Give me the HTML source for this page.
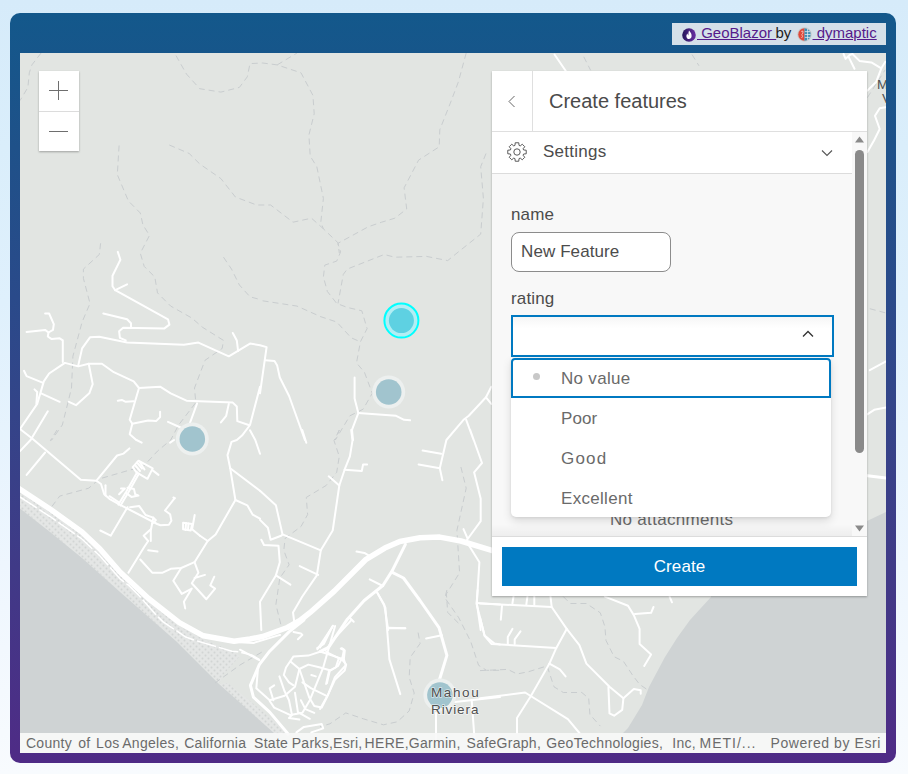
<!DOCTYPE html>
<html><head><meta charset="utf-8">
<style>
*{box-sizing:border-box;margin:0;padding:0}
html,body{width:908px;height:774px;overflow:hidden}
body{font-family:"Liberation Sans",sans-serif;background:linear-gradient(180deg,#d6ebfa 0%,#daeefb 19%,#dff0fc 39%,#eef6fe 73%,#f8fbfe 100%);position:relative}
.a{position:absolute;white-space:nowrap}
#frame{position:absolute;left:10px;top:13px;width:886px;height:750px;border-radius:10px;background:linear-gradient(180deg,#13588b 0%,#1f5189 18%,#2a4a8a 38%,#334589 52%,#403a87 74%,#4f2b86 100%)}
#credit{position:absolute;left:672px;top:23px;width:214px;height:22px;background:#d5e0e9}
#credit .t{position:absolute;top:-0.7px;font-size:15px;line-height:22px;color:#551a8b;text-decoration:underline}
#map{position:absolute;left:20px;top:53px;width:866px;height:700px;background:#e2e5e2;overflow:hidden}
#map svg.m{position:absolute;left:0;top:0}
#zoom{position:absolute;left:19px;top:18px;width:40px;height:80px;background:#fff;box-shadow:0 1px 2px rgba(0,0,0,.3)}
#attr{position:absolute;left:0;top:680px;width:866px;height:20px;background:rgba(248,248,248,.9);font-size:14px;color:#6b6b6b;line-height:20px;white-space:nowrap}
#panel{position:absolute;left:472px;top:18px;width:375px;height:525px;background:#fff;box-shadow:0 1px 2px rgba(0,0,0,.3)}
#panel .t{position:absolute;white-space:nowrap;color:#4c4c4c}
</style></head>
<body>
<div id="frame"></div>
<div id="credit">
  <svg class="a" style="left:10px;top:5px" width="14" height="14" viewBox="0 0 14 14"><defs><linearGradient id="gb" x1="0" y1="0" x2="1" y2="0"><stop offset="0" stop-color="#24175a"/><stop offset="1" stop-color="#6b2fa3"/></linearGradient></defs><circle cx="7" cy="7" r="6.8" fill="url(#gb)"/><path d="M7 2.6 C8.8 4.6 9.8 6.2 9.6 8.2 C9.4 10 8.3 11 7 11 C5.7 11 4.6 10 4.4 8.4 C4.3 7.3 4.9 6.2 5.5 5.6 C5.6 6.6 6 7.2 6.4 7.4 C6.3 5.6 6.5 4 7 2.6Z" fill="#fff"/></svg>
  <span class="t" style="left:25px">&nbsp;GeoBlazor&nbsp;</span>
  <span class="t" style="left:103.5px;color:#222;text-decoration:none">by</span>
  <svg class="a" style="left:125px;top:4px" width="15" height="15" viewBox="0 0 15 15"><circle cx="7.5" cy="7.5" r="7.2" fill="#c9c9c9"/><path d="M7.5 1.3 A6.2 6.2 0 0 0 7.5 13.7Z" fill="#e0493a"/><path d="M7.5 1.3 A6.2 6.2 0 0 1 7.5 13.7Z" fill="#3f8fb5"/><path d="M4.2 4.5 L5.8 4 L6 6 L4.8 7.5 L5.5 9.5 L4.5 11" stroke="#f3d0c8" stroke-width=".8" fill="none"/><path d="M7.8 4.6H13M7.8 7.5H13.7M7.8 10.4H13M10.6 1.8V13.2" stroke="#dfeaf0" stroke-width=".8" fill="none"/></svg>
  <span class="t" style="left:140.5px">&nbsp;dymaptic</span>
</div>
<div id="map">
<svg class="m" width="866" height="700" viewBox="20 53 866 700">
<defs><pattern id="dots" width="6" height="6" patternUnits="userSpaceOnUse"><rect width="6" height="6" fill="#e4e6e5"/><circle cx="1.5" cy="1.5" r="1" fill="#d2d5d4"/><circle cx="4.5" cy="4.5" r="1" fill="#d2d5d4"/></pattern></defs>
<path d="M20.0 492.0 L50.0 512.0 L82.0 535.0 L100.0 552.0 L120.0 575.0 L148.5 601.0 L179.3 626.0 L203.0 639.0 L234.0 652.0 L240.0 656.0 L223.0 675.0 L219.0 684.0 L228.0 683.0 L290.0 734.0 L274.0 734.0 L219.0 684.0 L177.0 642.0 L120.0 592.0 L82.0 558.0 L50.0 532.0 L20.0 508.5Z" fill="url(#dots)"/>
<path d="M20.0 508.5 L50.0 532.0 L82.0 558.0 L120.0 592.0 L177.0 642.0 L219.0 684.0 L274.0 733.0 L20.0 733.0Z" fill="#cfd3d4"/>
<path d="M623.0 733.0 L628.0 728.0 L642.0 705.0 L649.0 687.0 L665.0 657.0 L677.0 638.0 L690.0 620.0 L711.0 597.0 L711.0 560.0 L867.0 521.0 L886.0 512.0 L886.0 733.0Z" fill="#cfd3d4"/>
<g fill="none" stroke="#c9cdcf" stroke-width="1" stroke-dasharray="6 4"><path d="M41.1 53.0 L31.9 64.9 L29.3 72.8 L27.9 87.4 L20.0 100.6"/><path d="M176.0 55.6 L186.5 74.1 L199.7 88.7 L220.9 92.1 L239.4 87.4 L247.3 76.8 L250.0 63.6 L262.6 63.0 L277.2 64.9 L301.0 72.8 L312.9 95.3 L314.2 113.8 L308.9 135.0 L310.2 156.1 L316.8 166.7 L323.4 198.4 L320.8 222.2 L323.4 228.8 L338.0 242.8 L339.3 253.0"/><path d="M277.2 64.9 L297.0 53.0"/><path d="M119.1 145.5 L117.3 174.6 L128.4 201.0 L140.3 213.0 L142.9 224.8 L149.5 235.4 L140.3 253.2 L144.2 266.4 L154.8 277.0 L157.5 292.9 L170.7 306.1 L191.8 318.0 L202.4 327.2 L223.5 340.4 L222.2 348.4 L205.0 360.3 L194.5 388.0 L195.8 402.6 L178.6 425.0 L170.7 440.0 L157.5 451.1 L141.6 468.3 L131.0 469.7 L99.3 478.9 L88.7 488.2 L59.7 496.1 L51.7 506.7"/><path d="M169.3 145.0 L189.2 153.5 L199.8 164.0 L220.9 178.6 L235.4 197.0 L256.6 205.0 L270.6 205.0 L293.0 222.2 L311.5 218.2 L323.4 228.8"/><path d="M100.6 243.3 L99.3 254.5 L83.4 269.1 L83.4 278.3 L90.0 303.4 L82.1 322.0 L72.9 356.3 L71.5 388.0 L67.6 403.9 L62.3 425.0 L51.7 440.0 L50.4 440.6 L57.0 430.0"/><path d="M466.2 53.0 L458.3 82.1 L450.3 103.2 L439.8 129.7 L439.2 146.8 L418.6 160.1 L404.1 187.8 L406.7 209.0 L394.8 218.2 L381.6 222.2 L368.4 226.7 L338.0 243.3 L338.0 244.0 L340.6 251.9 L336.7 261.1 L324.8 265.1 L323.4 277.0 L327.4 291.5 L336.7 303.4 L347.2 307.4 L361.8 310.8 L367.1 328.6 L360.4 341.8 L356.5 362.9 L364.4 372.2 L372.3 393.3 L363.1 409.2 L349.9 415.8 L335.3 440.0 L339.3 430.0"/><path d="M486.0 153.5 L480.7 166.7 L483.4 198.4 L480.7 234.1 L457.0 253.0 L447.7 260.6 L426.5 256.4 L394.8 257.2 L384.2 254.5 L347.2 269.1 L343.3 274.4 L338.0 303.4"/><path d="M223.5 257.2 L231.5 269.1 L239.4 285.0 L250.0 296.8 L260.0 299.5"/><path d="M262.6 300.8 L297.0 306.1 L320.8 316.7 L336.7 322.0 L351.2 337.8 L360.4 341.8"/><path d="M339.3 430.0 L334.0 440.6 L339.3 456.4 L336.7 472.3 L326.1 485.5 L306.3 497.4 L307.6 514.6 L301.0 526.5 L285.1 538.4 L283.8 550.3 L289.1 564.8 L279.8 578.0 L275.9 604.5 L281.1 625.6"/><path d="M460.9 467.0 L466.2 488.2 L456.9 530.5 L459.6 572.7 L446.4 593.9 L447.7 612.4 L460.9 625.6"/><path d="M446.9 590.0 L444.9 597.9 L458.8 617.8 L470.7 641.5 L478.6 665.3 L486.5 670.3 L500.0 670.3"/><path d="M418.1 632.6 L420.1 643.5 L410.2 657.4 L409.2 677.2 L414.2 693.1 L409.2 710.9 L397.3 721.8 L383.4 724.8 L363.6 718.9 L345.8 712.9 L329.9 723.8 L320.0 726.8"/><path d="M563.3 596.6 L570.2 603.5 L586.4 603.5 L600.3 612.8 L604.9 626.6 L606.0 640.5 L614.1 656.7 L623.4 661.3 L632.6 675.2 L639.6 684.4 L646.5 689.1"/><path d="M480.0 670.6 L507.8 669.4 L517.0 674.0 L528.6 671.7 L547.1 665.9 L554.0 686.8 L563.3 692.5 L581.8 692.5 L588.7 698.3 L589.9 714.5 L600.3 726.1"/><path d="M583.8 56.8 L590.6 70.3"/><path d="M692.0 54.5 L699.0 65.8"/><path d="M869.8 308.7 L886.0 313.0"/><path d="M867.4 97.6 L885.2 69.8"/><path d="M215.0 683.0 L240.0 665.0 L262.0 652.0"/></g>
<g fill="none" stroke="#fff" stroke-width="2" stroke-linejoin="round" stroke-linecap="round"><path d="M117.8 251.9 L120.4 259.8 L112.5 275.7 L112.5 286.3 L115.2 290.2 L168.0 319.3 L169.4 324.6 L164.1 328.6 L123.1 327.8 L119.1 331.2 L119.9 337.8 L125.7 340.4"/><path d="M115.2 290.2 L127.1 284.4"/><path d="M103.3 313.5 L127.1 319.3 L131.0 323.3 L131.0 327.2"/><path d="M78.2 365.6 L82.1 348.4 L90.0 337.3 L99.3 336.7 L127.1 342.6 L183.9 344.7 L198.4 342.6 L228.8 356.3 L250.0 343.6 L260.0 345.2 L266.6 347.1 L260.0 393.3"/><path d="M232.8 333.0 L236.8 340.4 L238.1 351.0"/><path d="M26.6 332.0 L45.1 329.9 L48.5 332.5 L47.8 336.5 L51.7 339.1 L59.7 338.3 L62.8 340.4 L62.8 362.1"/><path d="M45.1 313.5 L49.1 313.5 L53.8 324.1 L53.0 329.9 L48.5 332.5"/><path d="M20.0 429.0 L37.2 403.9 L43.8 381.4 L49.1 373.5 L64.9 362.9 L78.2 366.4 L88.7 363.7 L101.9 363.7 L113.8 372.2 L133.7 381.4 L139.0 388.0 L160.1 386.7 L170.7 393.3 L186.5 400.7 L232.8 402.6 L236.8 406.5 L237.3 421.1 L248.7 425.0"/><path d="M88.7 363.7 L92.7 384.1 L89.3 393.3 L76.0 405.2 L68.9 401.8"/><path d="M139.0 388.0 L129.7 419.7 L132.3 423.7 L129.7 434.3 L136.3 440.0"/><path d="M132.3 423.7 L148.2 420.5 L156.1 421.1 L160.1 417.1 L160.1 411.8"/><path d="M197.1 403.4 L189.2 425.0"/><path d="M228.8 403.9 L226.2 415.8 L220.9 422.4"/><path d="M260.0 386.7 L250.0 425.0 L242.0 435.6 L236.8 440.0 L231.5 441.9 L227.5 455.1 L230.2 468.3 L235.4 500.0 L215.6 534.4 L207.7 541.0 L194.5 562.2 L181.2 568.0 L170.7 568.8 L162.7 572.7 L152.2 572.7 L140.3 559.5"/><path d="M250.0 430.3 L255.3 440.0 L260.0 453.8"/><path d="M24.0 370.8 L26.6 376.1 L42.5 382.7"/><path d="M34.5 389.4 L37.2 392.0 L36.4 403.9"/><path d="M41.1 393.3 L59.7 401.8"/><path d="M47.8 411.3 L30.6 440.0 L20.0 451.1"/><path d="M117.8 400.7 L121.8 399.9 L125.7 401.8 L133.7 401.2"/><path d="M168.0 421.9 L183.9 429.0"/><path d="M20.0 429.0 L31.9 438.3 L80.8 479.7 L96.5 480.7 L117.1 455.5 L123.6 453.6 L129.4 448.4"/><path d="M45.1 452.5 L26.6 474.9"/><path d="M96.5 480.7 L101.0 484.0 L104.2 494.3 L109.4 498.8 L119.7 504.6 L157.2 524.0 L160.4 525.3 L168.9 524.7 L171.4 520.8 L170.1 514.3 L165.0 510.5 L174.7 498.2"/><path d="M127.5 507.2 L110.7 535.7 L100.3 530.5"/><path d="M137.2 472.3 L126.2 491.7 L118.4 504.6"/><path d="M139.0 473.5 L128.0 493.0 L120.5 505.5"/><path d="M127.5 487.8 L134.0 489.1 L135.2 494.3 L138.5 495.6 L131.4 496.9 L126.2 493.0"/><path d="M121.0 488.5 L124.9 488.5 L119.1 494.3"/><path d="M105.5 485.2 L105.5 495.6"/><path d="M109.4 496.2 L118.4 502.0"/><path d="M130.1 507.2 L139.1 505.9 L145.6 515.0 L153.3 517.6 L155.9 520.1 L152.0 524.0"/><path d="M153.3 517.6 L150.8 530.5 L150.8 541.0"/><path d="M150.8 529.2 L143.6 535.7 L148.2 541.0"/><path d="M136.5 440.0 L141.7 442.6"/><path d="M170.1 442.6 L174.0 440.0"/><path d="M132.7 467.1 L138.5 460.7 L152.7 468.4 L147.5 478.8 L136.5 472.3 L132.7 467.1"/><path d="M135.0 465.0 L140.0 471.0"/><path d="M137.0 462.5 L142.0 468.5"/><path d="M139.5 461.5 L144.5 469.5"/><path d="M183.1 522.7 L192.1 524.0 L190.8 530.5 L183.1 529.2 L183.1 522.7"/><path d="M186.0 523.0 L185.5 530.0"/><path d="M188.5 523.5 L188.0 530.0"/><path d="M152.7 470.4 L158.5 474.9"/><path d="M148.2 541.0 L144.2 547.0 L128.4 572.7"/><path d="M235.4 500.0 L247.3 505.3 L252.6 514.6 L260.0 518.6"/><path d="M230.2 468.3 L260.0 490.8"/><path d="M207.7 541.0 L200.0 535.7"/><path d="M194.7 515.0 L192.1 529.2 L200.0 535.7"/><path d="M174.7 498.2 L173.4 497.5"/><path d="M194.5 562.2 L198.4 572.7 L191.8 583.3 L206.4 599.2 L215.1 588.6 L210.3 585.4 L214.3 576.7"/><path d="M181.2 568.0 L173.3 580.7 L181.8 593.9 L191.8 588.6 L183.9 601.8 L185.2 608.4"/><path d="M194.5 578.0 L205.0 574.9"/><path d="M148.2 550.3 L157.5 551.6"/><path d="M265.3 360.3 L274.5 361.1 L277.2 365.6 L279.8 377.5 L289.1 396.0 L304.9 440.0"/><path d="M354.6 377.5 L354.6 398.6 L358.3 413.1 L352.0 429.8 L353.0 440.0"/><path d="M358.3 413.1 L396.1 415.8 L404.1 419.8 L410.1 420.3"/><path d="M491.3 386.7 L486.0 397.3 L468.8 415.8 L463.5 419.8 L446.4 440.0 L439.8 468.3 L442.4 480.2"/><path d="M486.0 397.3 L491.3 403.9"/><path d="M466.2 419.8 L473.6 440.0 L470.2 430.0 L482.0 463.0 L474.1 472.3 L480.7 498.7 L480.7 521.2 L466.2 541.0"/><path d="M422.6 450.6 L441.1 453.8"/><path d="M418.6 464.4 L439.8 468.3"/><path d="M463.5 529.1 L467.5 538.4"/><path d="M351.2 430.0 L352.5 440.6 L349.9 456.4 L344.6 469.7 L339.3 485.5 L332.7 530.5 L320.8 550.3 L316.8 575.4 L302.3 596.5 L293.0 612.4 L294.4 623.0"/><path d="M344.6 469.7 L361.8 471.0 L363.1 464.4 L367.1 464.4"/><path d="M328.7 476.3 L339.3 485.5"/><path d="M260.0 490.8 L275.9 505.3 L282.5 534.4 L320.8 550.3"/><path d="M260.0 519.9 L267.9 527.8 L270.6 539.7 L281.1 535.7 L282.5 534.4"/><path d="M261.3 539.7 L264.0 545.0 L278.5 545.8 L279.8 562.2 L275.9 575.4 L260.0 601.8 L261.3 630.0"/><path d="M275.9 575.4 L290.4 584.6"/><path d="M299.7 566.1 L318.2 574.9"/><path d="M302.3 430.0 L306.3 442.7"/><path d="M356.5 551.6 L364.4 552.9 L371.0 556.9"/><path d="M369.7 579.4 L382.9 586.0"/><path d="M376.3 591.3 L384.2 604.5 L388.2 630.0"/><path d="M466.2 541.0 L479.4 562.2 L476.8 603.1 L480.7 630.0"/><path d="M476.8 603.1 L500.0 604.5"/><path d="M388.2 628.3 L405.4 628.3"/><path d="M377.5 593.0 L385.4 607.8 L388.4 645.5 L389.4 659.4 L400.3 694.1"/><path d="M388.4 627.7 L405.2 628.3"/><path d="M426.1 638.6 L441.9 635.2"/><path d="M349.7 617.8 L353.7 621.7"/><path d="M332.9 625.7 L320.0 647.5"/><path d="M320.0 651.5 L343.8 659.4 L345.8 665.3 L334.9 677.2 L327.9 695.1 L320.0 709.0"/><path d="M340.8 648.5 L344.8 650.5 L343.8 659.4"/><path d="M338.8 658.4 L335.9 667.3 L329.9 670.3 L326.9 683.2"/><path d="M436.0 712.9 L436.0 740.0"/><path d="M454.8 702.0 L500.0 697.1"/><path d="M471.7 700.0 L474.6 740.0"/><path d="M477.6 590.0 L476.6 603.9 L484.6 635.6 L494.5 643.5 L500.0 644.5"/><path d="M257.8 670.5 L256.3 688.3 L269.7 700.2 L284.6 695.7 L295.0 686.8 L299.4 669.0 L308.3 664.6 L320.2 667.5 L330.6 670.5 L338.0 666.0 L342.5 657.1 L344.0 649.7 L341.7 648.2"/><path d="M269.7 701.0 L274.2 707.6 L290.5 715.1 L302.4 712.8 L309.8 700.2 L323.2 667.5 L335.1 625.9"/><path d="M351.4 620.0 L333.6 639.3 L326.1 649.7 L308.3 655.6 L293.5 656.4 L286.0 667.5 L283.8 675.0 L289.0 682.4 L293.5 685.3"/><path d="M317.2 648.2 L323.9 643.8 L332.8 625.9"/><path d="M326.1 651.9 L342.5 660.1 L346.2 664.6 L344.7 670.5 L335.1 679.4 L327.6 695.7 L321.7 707.6 L314.3 706.1 L309.1 697.2 L299.4 669.0"/><path d="M290.5 661.6 L299.4 669.0"/><path d="M302.4 682.4 L311.3 688.3 L326.1 695.7"/><path d="M329.1 670.5 L326.1 683.9"/><path d="M311.3 675.0 L315.8 676.4"/><path d="M279.4 676.4 L284.6 691.3 L289.0 700.2 L292.0 715.1 L289.0 718.0 L299.4 719.5"/><path d="M274.2 685.3 L269.7 688.3 L273.4 700.2"/><path d="M295.0 692.8 L297.9 712.1 L309.8 718.8"/><path d="M300.9 700.2 L305.4 709.1 L314.3 712.8"/><path d="M296.4 732.4 L303.9 726.9 L321.7 724.0 L323.2 728.4 L311.3 732.4"/><path d="M293.5 631.9 L300.9 633.4 L302.4 634.9 L297.9 639.3"/><path d="M240.0 642.3 L253.4 643.0 L280.1 634.9"/><path d="M240.0 649.7 L259.3 660.1"/><path d="M332.4 626.7 L317.4 649.2"/><path d="M480.0 603.5 L551.7 607.0 L566.7 628.9 L579.4 645.1 L586.4 663.6 L609.5 686.8 L623.4 698.3 L622.2 709.9 L614.1 715.7 L609.5 713.4 L608.4 686.8"/><path d="M623.4 698.3 L633.8 689.1 L640.7 690.2 L640.7 693.7"/><path d="M551.7 607.0 L550.5 596.6"/><path d="M512.4 603.5 L513.5 596.6"/><path d="M526.3 604.7 L527.4 596.6"/><path d="M534.3 604.7 L534.3 596.6"/><path d="M502.0 605.8 L500.8 619.7"/><path d="M480.0 617.4 L484.6 635.9 L491.6 644.0 L556.3 647.9 L566.7 628.9"/><path d="M507.8 644.0 L507.8 637.0 L512.4 628.9"/><path d="M514.7 644.0 L514.7 639.3 L520.5 631.3"/><path d="M556.3 647.9 L549.4 663.6 L530.9 696.0 L517.0 718.0 L517.0 733.0"/><path d="M549.4 663.6 L559.8 669.4 L565.6 676.4"/><path d="M480.0 698.3 L525.1 692.5 L567.9 719.1 L579.4 733.0"/><path d="M604.9 596.6 L628.0 605.8 L633.8 615.1 L639.6 628.9 L639.6 644.0 L651.1 654.4 L644.2 665.9"/><path d="M635.0 613.9 L651.1 612.8 L653.5 607.0"/><path d="M669.6 596.6 L672.0 602.3"/><path d="M843.6 54.0 L845.6 58.9 L849.6 55.0 L852.5 54.0 L859.5 60.9 L871.4 62.4 L881.3 68.3 L885.2 61.9"/><path d="M848.6 56.9 L854.5 68.8"/><path d="M881.3 68.3 L876.3 81.7 L867.4 90.6"/><path d="M885.4 107.2 L879.7 108.2 L875.0 115.8 L879.7 129.0 L874.0 140.5 L867.4 152.0"/><path d="M869.8 370.2 L886.0 361.4"/><path d="M867.6 414.2 L874.2 409.8 L886.0 407.6"/><path d="M554.5 54.5 L565.8 71.0"/></g>
<g fill="none" stroke="#fff" stroke-width="3" stroke-linejoin="round" stroke-linecap="round"><path d="M405.4 544.3 L392.3 570.6 L382.9 585.5 L364.2 600.5 L347.4 619.2 L328.6 647.3 L320.0 651.5"/><path d="M392.3 572.4 L403.5 578.0 L420.0 600.5 L439.0 627.7 L446.9 655.4 L439.0 681.2"/><path d="M303.9 620.0 L289.0 631.9 L269.7 651.2 L259.3 664.6 L250.4 685.3 L253.4 697.2 L269.7 712.1 L286.0 731.4 L288.0 734.0"/><path d="M867.6 475.7 L886.0 477.9"/></g>
<path d="M20.0 497.0 L50.0 516.5 L82.0 539.0 L100.0 556.0 L120.0 578.8 L128.8 585.4 L138.7 595.2 L156.2 615.0 L162.8 621.6 L185.8 637.0 L194.6 640.2 L231.9 651.2 L239.6 652.0 L251.7 655.0 L260.5 660.0" fill="none" stroke="#fff" stroke-width="1.5" stroke-dasharray="20 3"/>
<path d="M18.0 488.0 L50.0 509.0 L82.0 532.0 L100.0 549.0 L120.0 572.0 L148.5 598.5 L179.3 622.7 L203.4 635.8 L234.1 641.3 L250.0 639.0 L262.7 636.5 L287.4 627.5 L300.0 620.5 L309.9 612.7 L334.3 591.1 L366.1 559.3 L384.8 548.1 L399.8 541.5 L420.0 537.8 L439.8 537.1 L460.9 541.0 L500.0 552.9 L520.0 560.0" fill="none" stroke="#fff" stroke-width="5.5" stroke-linejoin="round"/>
<circle cx="192.3" cy="439" r="16.5" fill="#edf0ef"/><circle cx="192.3" cy="439" r="12.8" fill="#a1c4ce"/>
<circle cx="388.7" cy="392" r="16.5" fill="#edf0ef"/><circle cx="388.7" cy="392" r="12.8" fill="#a1c4ce"/>
<circle cx="439.9" cy="695.1" r="16.5" fill="#edf0ef"/><circle cx="439.9" cy="695.1" r="12.8" fill="#a1c4ce"/>
<circle cx="401.4" cy="320.6" r="17" fill="#b2eef4" stroke="#00ffff" stroke-width="2"/><circle cx="401.4" cy="320.6" r="12.5" fill="#5ed1e2"/>
<g font-family="Liberation Sans" font-size="13.5" fill="#505050" stroke="rgba(255,255,255,.6)" stroke-width="1.5" paint-order="stroke" letter-spacing=".9"><text x="431" y="696.6" letter-spacing="1.6">Mahou</text><text x="431" y="714.2">Riviera</text></g>
<g font-family="Liberation Sans" font-size="13.5" fill="#505050"><text x="877" y="89">M</text><text x="882" y="103">V</text></g>
</svg>
<div id="zoom">
  <div class="a" style="left:0;top:40px;width:40px;height:1px;background:#dcdcdc"></div>
  <div class="a" style="left:10px;top:19px;width:19px;height:1px;background:#6e6e6e"></div>
  <div class="a" style="left:19px;top:10px;width:1px;height:19px;background:#6e6e6e"></div>
  <div class="a" style="left:10px;top:60px;width:19px;height:1px;background:#6e6e6e"></div>
</div>
<div id="panel">
  <!-- header -->
  <div class="a" style="left:0;top:60px;width:375px;height:1px;background:#dfdfdf"></div>
  <div class="a" style="left:40px;top:0;width:1px;height:60px;background:#dfdfdf"></div>
  <svg class="a" style="left:15px;top:24px" width="10" height="13" viewBox="0 0 10 13"><path d="M7.5 1 L2 6.5 L7.5 12" stroke="#666" stroke-width="1" fill="none"/></svg>
  <span class="t" style="left:57px;top:18px;font-size:20px;line-height:24px;color:#4a4a4a">Create features</span>
  <!-- scroll area -->
  <div class="a" style="left:0;top:61px;width:360px;height:404px;background:#f8f8f8;overflow:hidden">
    <div class="a" style="left:0;top:0;width:360px;height:42px;background:#fff;border-bottom:1px solid #dcdcdc"></div>
    <svg class="a" style="left:15px;top:10px" width="20" height="20" viewBox="0 0 20 20"><g fill="none" stroke="#5a5a5a" stroke-width="1" stroke-linejoin="round"><path d="M16.60 7.98 L19.23 8.21 L19.23 11.79 L16.60 12.02 L16.09 13.24 L17.79 15.26 L15.26 17.79 L13.24 16.09 L12.02 16.60 L11.79 19.23 L8.21 19.23 L7.98 16.60 L6.76 16.09 L4.74 17.79 L2.21 15.26 L3.91 13.24 L3.40 12.02 L0.77 11.79 L0.77 8.21 L3.40 7.98 L3.91 6.76 L2.21 4.74 L4.74 2.21 L6.76 3.91 L7.98 3.40 L8.21 0.77 L11.79 0.77 L12.02 3.40 L13.24 3.91 L15.26 2.21 L17.79 4.74 L16.09 6.76Z"/><circle cx="10" cy="10" r="3.2"/></g></svg>
    <span class="t" style="left:51px;top:9px;font-size:17px;line-height:22px;letter-spacing:.25px">Settings</span>
    <svg class="a" style="left:329px;top:16.5px" width="12" height="8" viewBox="0 0 12 8"><path d="M1 1.5 L6 6.5 L11 1.5" stroke="#555" stroke-width="1.1" fill="none"/></svg>
    <span class="t" style="left:19px;top:72px;font-size:17px;line-height:22px;letter-spacing:.15px">name</span>
    <div class="a" style="left:19px;top:100px;width:160px;height:40px;border:1px solid #8c8c8c;border-radius:8px;background:#fff"></div>
    <span class="t" style="left:29px;top:109px;font-size:17px;line-height:22px;letter-spacing:.1px">New Feature</span>
    <span class="t" style="left:19px;top:156px;font-size:17px;line-height:22px;letter-spacing:.15px">rating</span>
    <div class="a" style="left:19px;top:183px;width:323px;height:42px;border:2px solid #0079c1;background:linear-gradient(180deg,#f6f6f6,#fff 30%)"></div>
    <svg class="a" style="left:309px;top:197px" width="14" height="9" viewBox="0 0 14 9"><path d="M2 7.5 L7 2.5 L12 7.5" stroke="#333" stroke-width="1.3" fill="none"/></svg>
    <span class="t" style="left:118px;top:376.5px;font-size:17px;line-height:22px;color:#6a6a6a;letter-spacing:.3px">No attachments</span>
  </div>
  <div class="a" style="left:0;top:453px;width:375px;height:12px;background:linear-gradient(180deg,rgba(0,0,0,0),rgba(0,0,0,.045))"></div>
  <!-- scrollbar -->
  <div class="a" style="left:360px;top:61px;width:15px;height:404px;background:#f8f8f8"></div>
  <svg class="a" style="left:363px;top:65px" width="9" height="7" viewBox="0 0 9 7"><path d="M4.5 0.5 L9 6.5 H0Z" fill="#8a8a8a"/></svg>
  <div class="a" style="left:363px;top:79px;width:9px;height:303px;border-radius:5px;background:#8a8a8a"></div>
  <svg class="a" style="left:363px;top:454px" width="9" height="7" viewBox="0 0 9 7"><path d="M0 0.5 H9 L4.5 6.5Z" fill="#8a8a8a"/></svg>
  <!-- footer -->
  <div class="a" style="left:0;top:465px;width:375px;height:1px;background:#dcdcdc"></div>
  <div class="a" style="left:10px;top:476px;width:355px;height:39px;background:#0079c1"></div>
  <span class="t" style="left:10px;top:484.5px;width:355px;text-align:center;font-size:17px;line-height:22px;color:#fff;letter-spacing:.1px">Create</span>
</div>
<!-- dropdown -->
<div class="a" style="left:491px;top:305px;width:320px;height:159px;background:#fff;border-radius:0 0 5px 5px;box-shadow:0 4px 10px rgba(0,0,0,.12),0 1px 3px rgba(0,0,0,.08)">
  <div class="a" style="left:0;top:0;width:320px;height:40px;border:2px solid #0079c1;border-radius:4px 4px 0 0"></div>
  <div class="a" style="left:22px;top:15px;width:7px;height:7px;border-radius:50%;background:#c8c8c8"></div>
  <span class="a" style="left:50px;top:9.5px;font-size:17px;line-height:22px;color:#6a6a6a;letter-spacing:.3px">No value</span>
  <span class="a" style="left:50px;top:49.5px;font-size:17px;line-height:22px;color:#6a6a6a;letter-spacing:.1px">Poor</span>
  <span class="a" style="left:50px;top:89.5px;font-size:17px;line-height:22px;color:#6a6a6a;letter-spacing:1.2px">Good</span>
  <span class="a" style="left:50px;top:129.5px;font-size:17px;line-height:22px;color:#6a6a6a;letter-spacing:.3px">Excellent</span>
</div>
<div id="attr">
  <span class="a" style="left:5.9px;top:-0.5px;letter-spacing:.3px">County</span><span class="a" style="left:58.2px;top:-0.5px;letter-spacing:.3px">of</span><span class="a" style="left:76.1px;top:-0.5px;letter-spacing:.3px">Los</span><span class="a" style="left:102.2px;top:-0.5px;letter-spacing:.3px">Angeles,</span><span class="a" style="left:164.2px;top:-0.5px;letter-spacing:.3px">California</span><span class="a" style="left:234.0px;top:-0.5px;letter-spacing:.3px">State</span><span class="a" style="left:271.7px;top:-0.5px;letter-spacing:.3px">Parks,</span><span class="a" style="left:313.0px;top:-0.5px;letter-spacing:.3px">Esri,</span><span class="a" style="left:344.6px;top:-0.5px;letter-spacing:.3px">HERE,</span><span class="a" style="left:388.7px;top:-0.5px;letter-spacing:.3px">Garmin,</span><span class="a" style="left:446.5px;top:-0.5px;letter-spacing:.3px">SafeGraph,</span><span class="a" style="left:526.3px;top:-0.5px;letter-spacing:.3px">GeoTechnologies,</span><span class="a" style="left:652.3px;top:-0.5px;letter-spacing:.3px">Inc,</span><span class="a" style="left:679.5px;top:-0.5px;letter-spacing:1px">METI/...</span>
  <span class="a" style="left:750.5px;top:-0.5px;letter-spacing:.56px">Powered by Esri</span>
</div>
</div>
</body></html>
